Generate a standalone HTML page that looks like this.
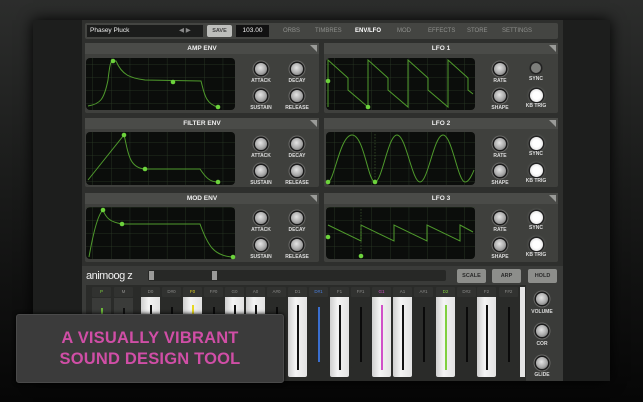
<!DOCTYPE html>
<html><head><meta charset="utf-8"><style>
*{margin:0;padding:0;box-sizing:border-box}
body{width:643px;height:402px;overflow:hidden;background:linear-gradient(#2c2d2c 0%,#1c1d1c 40%,#060606 100%);font-family:"Liberation Sans",sans-serif;position:relative}
.a{position:absolute}
.frame{left:33px;top:20px;width:577px;height:361px;background:#1d1e1d;box-shadow:0 0 14px #000}
.app{left:82px;top:20px;width:481px;height:361px;background:#2e2f2d}
.bar{left:85px;top:23px;width:473px;height:16px;background:#444542;border-radius:2px}
.pn{background:#3f403d;border-radius:2px}
.hd{background:#4a4b48;color:#eee;font-size:6.5px;text-align:center;line-height:11px;font-weight:bold}
.tri{width:0;height:0;border-left:7px solid transparent;border-top:7px solid #9a9b98}
.kn{width:12px;height:12px;border-radius:50%;background:radial-gradient(circle at 45% 40%,#e4e4e4,#a8a8a8 55%,#5a5a5a);box-shadow:0 0 0 1.5px #1b1b1b,0 0 0 2.5px #6a6a68}
.lb{font-size:5px;color:#ddd;text-align:center;width:40px;font-weight:bold}
.tab{font-size:6px;color:#8e8f8c;top:28px}
.col{width:19px}
.kl{height:10px;background:#313230;color:#8a8a88;font-size:4.5px;text-align:center;line-height:10px;border-radius:1px}
.wk{background:linear-gradient(90deg,#cfcfcf,#f4f4f4 40%,#e2e2e2);border-radius:0 0 2px 2px}
.bk{background:#2a2b29;border-radius:0 0 2px 2px}
.ln{width:2px;left:8.5px}
.btn{background:#8d8e8b;color:#2a2a2a;font-size:5.5px;text-align:center;line-height:14px;border-radius:2px;font-weight:bold}
.wb{width:13px;height:13px;border-radius:50%;background:radial-gradient(#fff 40%,#d0d0d0);box-shadow:0 0 0 1.5px #222,0 0 3px #ddd}
</style></head><body>
<div class="a frame"></div>
<div class="a app"></div>
<div class="a bar"></div>
<div class="a" style="left:87px;top:25px;width:116px;height:12px;background:#1b1c1b;color:#eee;font-size:6.5px;line-height:12px;padding-left:3px">Phasey Pluck<span style="position:absolute;left:92px;color:#888">◀ ▶</span></div>
<div class="a" style="left:207px;top:25px;width:25px;height:12px;background:#bdbebb;color:#444;font-size:5.5px;text-align:center;line-height:12px;border-radius:2px;font-weight:bold">SAVE</div>
<div class="a" style="left:236px;top:25px;width:33px;height:12px;background:#111;color:#eee;font-size:6.5px;text-align:center;line-height:12px">103.00</div>
<div class="a tab" style="left:283px">ORBS</div>
<div class="a tab" style="left:315px">TIMBRES</div>
<div class="a tab" style="left:355px;color:#fff;font-weight:bold">ENV/LFO</div>
<div class="a tab" style="left:397px">MOD</div>
<div class="a tab" style="left:428px">EFFECTS</div>
<div class="a tab" style="left:467px">STORE</div>
<div class="a tab" style="left:502px">SETTINGS</div>

<div class="a pn" style="left:85px;top:43px;width:234px;height:70px"></div>
<div class="a pn" style="left:324px;top:43px;width:234px;height:70px"></div>
<div class="a pn" style="left:85px;top:118px;width:234px;height:69px"></div>
<div class="a pn" style="left:324px;top:118px;width:234px;height:69px"></div>
<div class="a pn" style="left:85px;top:193px;width:234px;height:69px"></div>
<div class="a pn" style="left:324px;top:193px;width:234px;height:69px"></div>
<div class="a hd" style="left:85px;top:43px;width:234px;height:11px">AMP ENV</div>
<div class="a hd" style="left:324px;top:43px;width:234px;height:11px">LFO 1</div>
<div class="a hd" style="left:85px;top:118px;width:234px;height:11px">FILTER ENV</div>
<div class="a hd" style="left:324px;top:118px;width:234px;height:11px">LFO 2</div>
<div class="a hd" style="left:85px;top:193px;width:234px;height:11px">MOD ENV</div>
<div class="a hd" style="left:324px;top:193px;width:234px;height:11px">LFO 3</div>
<div class="a tri" style="left:310px;top:45px"></div><div class="a tri" style="left:549px;top:45px"></div>
<div class="a tri" style="left:310px;top:120px"></div><div class="a tri" style="left:549px;top:120px"></div>
<div class="a tri" style="left:310px;top:195px"></div><div class="a tri" style="left:549px;top:195px"></div>

<svg class="a" style="left:0;top:0" width="643" height="402">
<defs><pattern id="gr" width="18.6" height="13" patternUnits="userSpaceOnUse"><path d="M18.6 0V13M0 13H18.6" stroke="#2a3a25" stroke-width=".8" fill="none"/></pattern></defs>
<g>
<rect x="86" y="58" width="149" height="52" rx="4" fill="#0b0d0b"/><rect x="86" y="58" width="149" height="52" fill="url(#gr)"/>
<rect x="326" y="58" width="149" height="52" rx="4" fill="#0b0d0b"/><rect x="326" y="58" width="149" height="52" fill="url(#gr)"/>
<rect x="86" y="132" width="149" height="53" rx="4" fill="#0b0d0b"/><rect x="86" y="132" width="149" height="53" fill="url(#gr)"/>
<rect x="326" y="132" width="149" height="53" rx="4" fill="#0b0d0b"/><rect x="326" y="132" width="149" height="53" fill="url(#gr)"/>
<rect x="86" y="207" width="149" height="52" rx="4" fill="#0b0d0b"/><rect x="86" y="207" width="149" height="52" fill="url(#gr)"/>
<rect x="326" y="207" width="149" height="52" rx="4" fill="#0b0d0b"/><rect x="326" y="207" width="149" height="52" fill="url(#gr)"/>
</g>
<g fill="none" stroke="#4f9a2c" stroke-width="1">
<path d="M88 106 C100 104 104 100 108 80 C110 62 111 61 113 61 L116 61 C122 75 130 78 145 80 L201 81 C204 92 205 104 218 107"/>
<path d="M88 180 L124 135 C128 150 128 168 145 169 L200 169 C206 178 210 182 218 182"/>
<path d="M89 257 C92 240 97 215 103 210 C106 218 110 222 122 224 L200 224 C208 246 214 256 233 257"/>
<path d="M328 107 V60 L348 78 V90 L368 107 V60 L388 78 V90 L408 107 V60 L428 78 V90 L448 107 V60 L468 78 V90 L473 94"/>
<path d="M328 182 C334 182 340 135 352 135 C364 135 368 182 375 182 C382 182 388 135 397 135 C406 135 412 182 420 182 C428 182 434 135 443 135 C452 135 458 182 465 182 C469 182 472 175 474 170"/>
<path d="M328 225 L361 241 V225 L394 241 V225 L427 241 V225 L460 241 V225 L473 232"/>
</g>
<g stroke="#3f5a30" stroke-width=".7" stroke-dasharray="1.5 1.5"><path d="M375 134V183M361 209V257"/></g>
<g fill="#6cd23c">
<circle cx="113" cy="61" r="2.3"/><circle cx="173" cy="82" r="2.3"/><circle cx="218" cy="107" r="2.3"/>
<circle cx="124" cy="135" r="2.3"/><circle cx="145" cy="169" r="2.3"/><circle cx="218" cy="182" r="2.3"/>
<circle cx="103" cy="210" r="2.3"/><circle cx="122" cy="224" r="2.3"/><circle cx="233" cy="257" r="2.3"/>
<circle cx="328" cy="81" r="2.3"/><circle cx="368" cy="107" r="2.3"/>
<circle cx="328" cy="182" r="2.3"/><circle cx="375" cy="182" r="2.3"/>
<circle cx="328" cy="237" r="2.3"/><circle cx="361" cy="256" r="2.3"/>
</g>
</svg>

<div class="a kn" style="left:255px;top:63px"></div><div class="a kn" style="left:291px;top:63px"></div>
<div class="a kn" style="left:255px;top:90px"></div><div class="a kn" style="left:291px;top:90px"></div>
<div class="a lb" style="left:241px;top:78px">ATTACK</div><div class="a lb" style="left:277px;top:78px">DECAY</div>
<div class="a lb" style="left:241px;top:105px">SUSTAIN</div><div class="a lb" style="left:277px;top:105px">RELEASE</div>
<div class="a kn" style="left:255px;top:138px"></div><div class="a kn" style="left:291px;top:138px"></div>
<div class="a kn" style="left:255px;top:165px"></div><div class="a kn" style="left:291px;top:165px"></div>
<div class="a lb" style="left:241px;top:153px">ATTACK</div><div class="a lb" style="left:277px;top:153px">DECAY</div>
<div class="a lb" style="left:241px;top:180px">SUSTAIN</div><div class="a lb" style="left:277px;top:180px">RELEASE</div>
<div class="a kn" style="left:255px;top:212px"></div><div class="a kn" style="left:291px;top:212px"></div>
<div class="a kn" style="left:255px;top:239px"></div><div class="a kn" style="left:291px;top:239px"></div>
<div class="a lb" style="left:241px;top:227px">ATTACK</div><div class="a lb" style="left:277px;top:227px">DECAY</div>
<div class="a lb" style="left:241px;top:254px">SUSTAIN</div><div class="a lb" style="left:277px;top:254px">RELEASE</div>

<div class="a kn" style="left:494px;top:63px"></div><div class="a kn" style="left:494px;top:90px"></div>
<div class="a lb" style="left:480px;top:78px">RATE</div><div class="a lb" style="left:480px;top:105px">SHAPE</div>
<div class="a" style="left:531px;top:63px;width:10px;height:10px;border-radius:50%;background:#7d7e7b;box-shadow:0 0 0 1.5px #222"></div>
<div class="a wb" style="left:530px;top:89px"></div>
<div class="a lb" style="left:516px;top:76px">SYNC</div><div class="a lb" style="left:516px;top:103px">KB TRIG</div>
<div class="a kn" style="left:494px;top:138px"></div><div class="a kn" style="left:494px;top:165px"></div>
<div class="a lb" style="left:480px;top:153px">RATE</div><div class="a lb" style="left:480px;top:180px">SHAPE</div>
<div class="a wb" style="left:530px;top:137px"></div>
<div class="a wb" style="left:530px;top:164px"></div>
<div class="a lb" style="left:516px;top:151px">SYNC</div><div class="a lb" style="left:516px;top:178px">KB TRIG</div>
<div class="a kn" style="left:494px;top:212px"></div><div class="a kn" style="left:494px;top:239px"></div>
<div class="a lb" style="left:480px;top:227px">RATE</div><div class="a lb" style="left:480px;top:254px">SHAPE</div>
<div class="a wb" style="left:530px;top:211px"></div>
<div class="a wb" style="left:530px;top:238px"></div>
<div class="a lb" style="left:516px;top:225px">SYNC</div><div class="a lb" style="left:516px;top:252px">KB TRIG</div>

<div class="a" style="left:82px;top:266px;width:481px;height:115px;background:#3a3b39"></div>
<div class="a" style="left:86px;top:270px;color:#f0f0f0;font-size:11px;letter-spacing:-0.5px">animoog z</div>
<div class="a" style="left:148px;top:270px;width:298px;height:11px;background:#272826;border-radius:2px"></div>
<div class="a" style="left:149px;top:271px;width:5px;height:9px;background:#9a9a98"></div>
<div class="a" style="left:212px;top:271px;width:5px;height:9px;background:#9a9a98"></div>
<div class="a btn" style="left:457px;top:269px;width:29px">SCALE</div>
<div class="a btn" style="left:492px;top:269px;width:29px">ARP</div>
<div class="a btn" style="left:528px;top:269px;width:29px">HOLD</div>
<div class="a" style="left:86px;top:285px;width:440px;height:96px;background:#2a2b29"></div>

<div class="a col" style="left:92px;top:287px"><div class="kl" style="color:#7fd040">P</div><div class="a bk" style="top:11px;width:19px;height:70px;background:#3a3b39"><div class="a ln" style="top:10px;height:30px;background:#6cb83a"></div></div></div>
<div class="a col" style="left:114px;top:287px"><div class="kl">M</div><div class="a bk" style="top:11px;width:19px;height:70px;background:#3a3b39"><div class="a ln" style="top:10px;height:30px;background:#111"></div></div></div>

<div class="a col" style="left:141px;top:287px"><div class="kl">D0</div><div class="a wk" style="top:10px;width:19px;height:80px"><div class="a ln" style="top:8px;height:65px;background:#111"></div></div></div>
<div class="a col" style="left:162px;top:287px"><div class="kl">D#0</div><div class="a bk" style="top:10px;width:19px;height:71px"><div class="a ln" style="top:10px;height:55px;background:#0a0a0a"></div></div></div>
<div class="a col" style="left:183px;top:287px"><div class="kl" style="color:#e0d020">F0</div><div class="a wk" style="top:10px;width:19px;height:80px"><div class="a ln" style="top:8px;height:65px;background:#e8d820"></div></div></div>
<div class="a col" style="left:204px;top:287px"><div class="kl">F#0</div><div class="a bk" style="top:10px;width:19px;height:71px"><div class="a ln" style="top:10px;height:55px;background:#0a0a0a"></div></div></div>
<div class="a col" style="left:225px;top:287px"><div class="kl">G0</div><div class="a wk" style="top:10px;width:19px;height:80px"><div class="a ln" style="top:8px;height:65px;background:#111"></div></div></div>
<div class="a col" style="left:246px;top:287px"><div class="kl">A0</div><div class="a wk" style="top:10px;width:19px;height:80px"><div class="a ln" style="top:8px;height:65px;background:#111"></div></div></div>
<div class="a col" style="left:267px;top:287px"><div class="kl">A#0</div><div class="a bk" style="top:10px;width:19px;height:71px"><div class="a ln" style="top:10px;height:55px;background:#0a0a0a"></div></div></div>
<div class="a col" style="left:288px;top:287px"><div class="kl">D1</div><div class="a wk" style="top:10px;width:19px;height:80px"><div class="a ln" style="top:8px;height:65px;background:#111"></div></div></div>
<div class="a col" style="left:309px;top:287px"><div class="kl" style="color:#4a80e0">D#1</div><div class="a bk" style="top:10px;width:19px;height:71px"><div class="a ln" style="top:10px;height:55px;background:#3a6fd0"></div></div></div>
<div class="a col" style="left:330px;top:287px"><div class="kl">F1</div><div class="a wk" style="top:10px;width:19px;height:80px"><div class="a ln" style="top:8px;height:65px;background:#111"></div></div></div>
<div class="a col" style="left:351px;top:287px"><div class="kl">F#1</div><div class="a bk" style="top:10px;width:19px;height:71px"><div class="a ln" style="top:10px;height:55px;background:#0a0a0a"></div></div></div>
<div class="a col" style="left:372px;top:287px"><div class="kl" style="color:#d050c8">G1</div><div class="a wk" style="top:10px;width:19px;height:80px"><div class="a ln" style="top:8px;height:65px;background:#d050c8"></div></div></div>
<div class="a col" style="left:393px;top:287px"><div class="kl">A1</div><div class="a wk" style="top:10px;width:19px;height:80px"><div class="a ln" style="top:8px;height:65px;background:#111"></div></div></div>
<div class="a col" style="left:414px;top:287px"><div class="kl">A#1</div><div class="a bk" style="top:10px;width:19px;height:71px"><div class="a ln" style="top:10px;height:55px;background:#0a0a0a"></div></div></div>
<div class="a col" style="left:436px;top:287px"><div class="kl" style="color:#80d040">D2</div><div class="a wk" style="top:10px;width:19px;height:80px"><div class="a ln" style="top:8px;height:65px;background:#80d040"></div></div></div>
<div class="a col" style="left:457px;top:287px"><div class="kl">D#2</div><div class="a bk" style="top:10px;width:19px;height:71px"><div class="a ln" style="top:10px;height:55px;background:#0a0a0a"></div></div></div>
<div class="a col" style="left:477px;top:287px"><div class="kl">F2</div><div class="a wk" style="top:10px;width:19px;height:80px"><div class="a ln" style="top:8px;height:65px;background:#111"></div></div></div>
<div class="a col" style="left:499px;top:287px"><div class="kl">F#2</div><div class="a bk" style="top:10px;width:19px;height:71px"><div class="a ln" style="top:10px;height:55px;background:#0a0a0a"></div></div></div>
<div class="a" style="left:520px;top:287px;width:5px;height:90px;background:#e4e4e4"></div>
<div class="a" style="left:526px;top:285px;width:37px;height:96px;background:#3a3b39"></div>
<div class="a kn" style="left:536px;top:293px"></div><div class="a lb" style="left:522px;top:309px">VOLUME</div>
<div class="a kn" style="left:536px;top:325px"></div><div class="a lb" style="left:522px;top:341px">COR</div>
<div class="a kn" style="left:536px;top:357px"></div><div class="a lb" style="left:522px;top:372px">GLIDE</div>

<div class="a" style="left:16px;top:314px;width:268px;height:69px;background:#3b3b3b;border-radius:3px;border:1px solid #4a4a4a;box-shadow:0 0 4px #000"></div>
<div class="a" style="left:16px;top:328px;width:268px;text-align:center;color:#d04ea6;font-size:16.5px;font-weight:bold;line-height:21px;letter-spacing:0.2px">A VISUALLY VIBRANT<br>SOUND DESIGN TOOL</div>
</body></html>
